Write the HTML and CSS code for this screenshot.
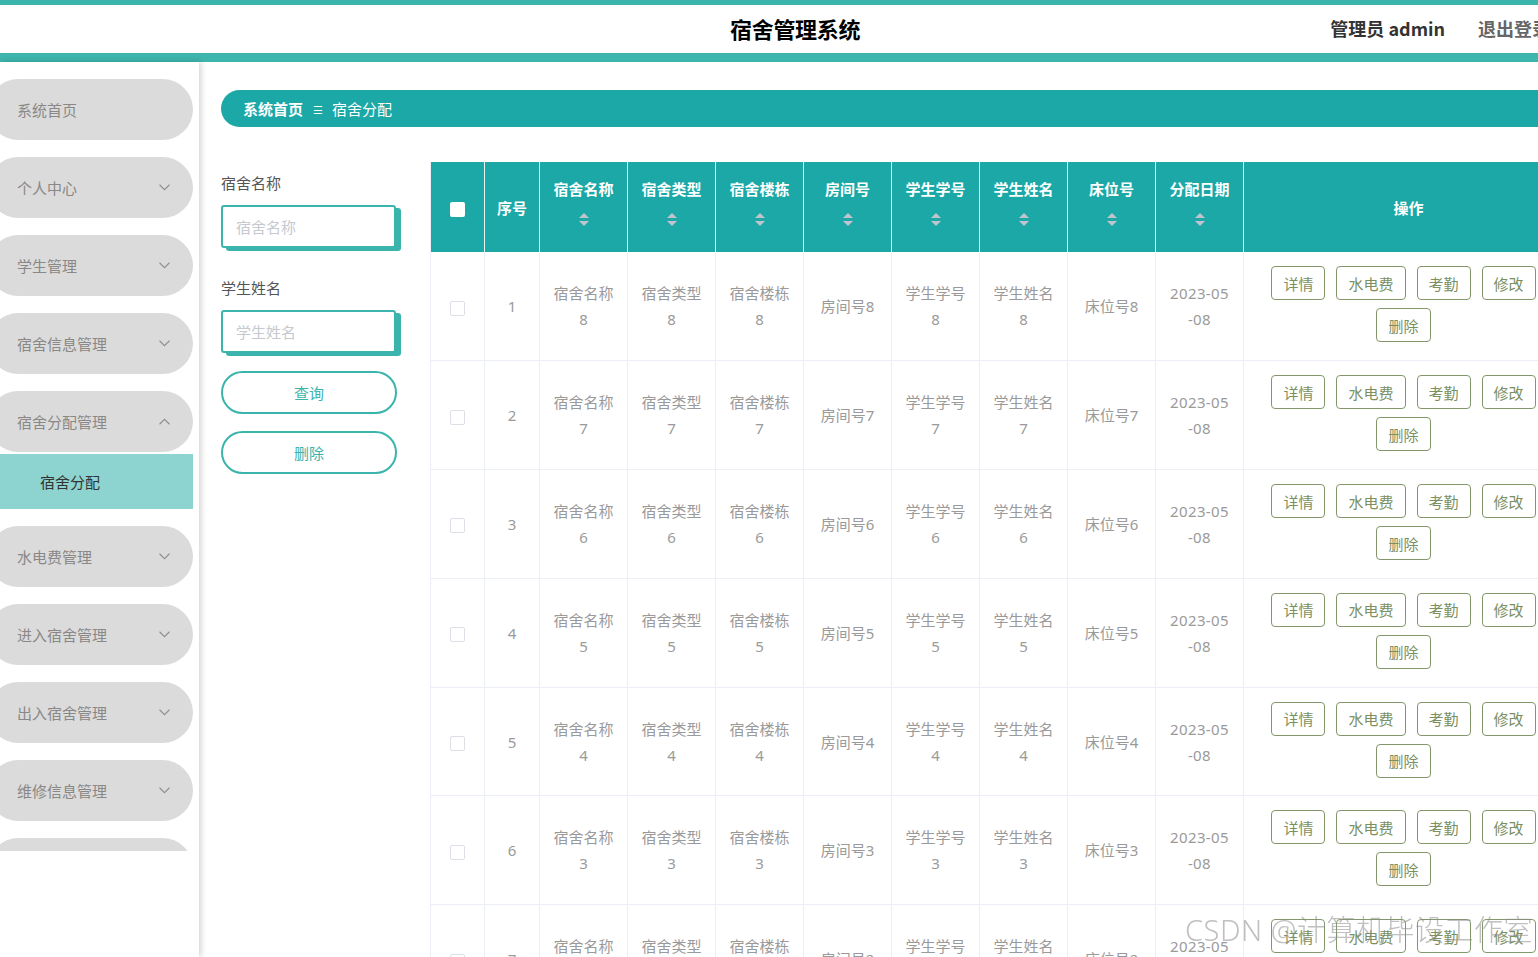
FILE: index.html
```html
<!DOCTYPE html>
<html lang="zh-CN">
<head>
<meta charset="utf-8">
<title>宿舍管理系统</title>
<link rel="stylesheet" href="styles.css">
</head>
<body>
<div class="topline"></div>
<header class="header">
  <div class="title">宿舍管理系统</div>
  <div class="user">
    <span class="admin">管理员 admin</span>
    <span class="logout">退出登录</span>
  </div>
</header>
<div class="band"></div>
<div class="layout">
  <aside class="sidebar">
    <nav class="menu">
      <div class="item">系统首页</div>
      <div class="item">个人中心<svg class="chev" viewBox="0 0 10 6"><polyline points="0.5,0.5 5,5 9.5,0.5"/></svg></div>
      <div class="item">学生管理<svg class="chev" viewBox="0 0 10 6"><polyline points="0.5,0.5 5,5 9.5,0.5"/></svg></div>
      <div class="item">宿舍信息管理<svg class="chev" viewBox="0 0 10 6"><polyline points="0.5,0.5 5,5 9.5,0.5"/></svg></div>
      <div class="item">宿舍分配管理<svg class="chev" viewBox="0 0 10 6"><polyline points="0.5,5.5 5,1 9.5,5.5"/></svg></div>
      <div class="sub">宿舍分配</div>
      <div class="item">水电费管理<svg class="chev" viewBox="0 0 10 6"><polyline points="0.5,0.5 5,5 9.5,0.5"/></svg></div>
      <div class="item">进入宿舍管理<svg class="chev" viewBox="0 0 10 6"><polyline points="0.5,0.5 5,5 9.5,0.5"/></svg></div>
      <div class="item">出入宿舍管理<svg class="chev" viewBox="0 0 10 6"><polyline points="0.5,0.5 5,5 9.5,0.5"/></svg></div>
      <div class="item">维修信息管理<svg class="chev" viewBox="0 0 10 6"><polyline points="0.5,0.5 5,5 9.5,0.5"/></svg></div>
      <div class="item">系统管理<svg class="chev" viewBox="0 0 10 6"><polyline points="0.5,0.5 5,5 9.5,0.5"/></svg></div>
    </nav>
  </aside>
  <main class="main">
    <div class="crumb"><b>系统首页</b><span class="sep">☰</span><span>宿舍分配</span></div>
    <div class="content">
      <form class="search">
        <label class="lbl">宿舍名称</label>
        <input class="inp" placeholder="宿舍名称">
        <label class="lbl lbl2">学生姓名</label>
        <input class="inp" placeholder="学生姓名">
        <button type="button" class="pill first">查询</button>
        <button type="button" class="pill">删除</button>
      </form>
      <table class="grid">
        <colgroup>
          <col class="c-chk"><col class="c-idx"><col class="c-n"><col class="c-n"><col class="c-n"><col class="c-n"><col class="c-n"><col class="c-n"><col class="c-n"><col class="c-n"><col class="c-op">
        </colgroup>
        <thead>
          <tr>
            <th><span class="hbox"></span></th>
            <th>序号</th>
            <th><div class="sortable">宿舍名称<span class="caret"><i class="up"></i><i class="dn"></i></span></div></th>
            <th><div class="sortable">宿舍类型<span class="caret"><i class="up"></i><i class="dn"></i></span></div></th>
            <th><div class="sortable">宿舍楼栋<span class="caret"><i class="up"></i><i class="dn"></i></span></div></th>
            <th><div class="sortable">房间号<span class="caret"><i class="up"></i><i class="dn"></i></span></div></th>
            <th><div class="sortable">学生学号<span class="caret"><i class="up"></i><i class="dn"></i></span></div></th>
            <th><div class="sortable">学生姓名<span class="caret"><i class="up"></i><i class="dn"></i></span></div></th>
            <th><div class="sortable">床位号<span class="caret"><i class="up"></i><i class="dn"></i></span></div></th>
            <th><div class="sortable">分配日期<span class="caret"><i class="up"></i><i class="dn"></i></span></div></th>
            <th class="opth">操作</th>
          </tr>
        </thead>
        <tbody id="rows"></tbody>
      </table>
    </div>
  </main>
</div>
<div class="watermark">CSDN @计算机毕设工作室</div>
<script>
(function(){
  var tb = document.getElementById('rows');
  var html = '';
  for (var i = 1; i <= 8; i++) {
    var n = 9 - i;
    html += '<tr>' +
      '<td><span class="box"></span></td>' +
      '<td><div class="cell">' + i + '</div></td>' +
      '<td><div class="cell">宿舍名称' + n + '</div></td>' +
      '<td><div class="cell">宿舍类型' + n + '</div></td>' +
      '<td><div class="cell">宿舍楼栋' + n + '</div></td>' +
      '<td><div class="cell">房间号' + n + '</div></td>' +
      '<td><div class="cell">学生学号' + n + '</div></td>' +
      '<td><div class="cell">学生姓名' + n + '</div></td>' +
      '<td><div class="cell">床位号' + n + '</div></td>' +
      '<td><div class="cell date">2023-05<br>-08</div></td>' +
      '<td class="op"><div class="ops"><span class="btn">详情</span><span class="btn">水电费</span><span class="btn">考勤</span><span class="btn">修改</span><span class="btn">删除</span></div></td>' +
      '</tr>';
  }
  tb.innerHTML = html;
})();
</script>
</body>
</html>
```
FILE: styles.css
```css
* { box-sizing: border-box; }
html, body {
  margin: 0;
  padding: 0;
  width: 1538px;
  height: 957px;
  overflow: hidden;
  background: #fff;
  font-family: "Noto Sans", "Noto Sans CJK SC", sans-serif;
  font-size: 15px;
}
.topline { height: 5px; background: #3bb4ad; }
.header {
  height: 48px;
  width: 1550px;
  display: flex;
  align-items: center;
  padding-left: 730px;
  padding-bottom: 3px;
  white-space: nowrap;
  font-family: "Noto Sans CJK SC", sans-serif;
}
.title { font-size: 22px; font-weight: 700; color: #000; letter-spacing: -0.3px; }
.user { margin-left: auto; display: flex; gap: 33px; font-size: 18px; font-weight: 700; padding-top: 1px; }
.admin { color: #333; }
.logout { color: #666; }
.band { height: 9px; background: #3eb5ad; }

.layout { display: flex; height: 895px; }
.sidebar {
  width: 199px;
  flex-shrink: 0;
  background: #fff;
  box-shadow: 2px 0 6px rgba(0,0,0,0.18);
  position: relative;
  z-index: 1;
}
.menu { height: 789px; overflow: hidden; padding-top: 17px; }
.item {
  margin-left: -12px;
  width: 205px;
  height: 61px;
  margin-bottom: 17px;
  border-radius: 31px;
  background: #dbdbdb;
  color: #8a8886;
  display: flex;
  align-items: center;
  padding-left: 29px;
  padding-right: 23px;
  font-family: "Noto Sans CJK SC", sans-serif;
  font-size: 15px;
}
.chev {
  margin-left: auto;
  width: 11px;
  height: 7px;
  fill: none;
  stroke: #8f8f8f;
  stroke-width: 1;
}
.item:nth-child(5) { margin-bottom: 2px; }
.sub {
  width: 193px;
  height: 55px;
  margin-bottom: 17px;
  background: #8dd3cf;
  color: #333;
  display: flex;
  align-items: center;
  padding-left: 40px;
  font-size: 15px;
  font-family: "Noto Sans CJK SC", sans-serif;
}

.main { flex: 1; min-width: 0; overflow: hidden; padding: 28px 0 0 22px; }
.crumb {
  width: 1360px;
  height: 37px;
  border-radius: 19px 0 0 19px;
  background: #1ba8a6;
  color: #fff;
  display: flex;
  align-items: center;
  padding-left: 22px;
  font-family: "Noto Sans CJK SC", sans-serif;
  font-size: 15px;
}
.crumb b { font-weight: 700; }
.sep { margin: 0 9px 0 10px; font-size: 11px; }

.content { display: flex; align-items: flex-start; margin-top: 35px; }
.search { width: 209px; flex-shrink: 0; display: flex; flex-direction: column; padding-top: 11px; }
.lbl { color: #555; font-size: 15px; line-height: 20px; font-family: "Noto Sans CJK SC", sans-serif; }
.lbl2 { margin-top: 30px; }
.inp {
  margin-top: 12px;
  width: 175px;
  height: 43px;
  border: 2px solid #3bb4ad;
  border-radius: 3px;
  box-shadow: 5px 3px 0 #3bb4ad;
  padding: 0 13px;
  font-size: 15px;
  font-family: "Noto Sans CJK SC", sans-serif;
  color: #333;
  outline: none;
}
.inp::placeholder { color: #c6c9cf; }
.pill {
  width: 176px;
  height: 43px;
  border: 2px solid #3bb4ad;
  border-radius: 22px;
  background: #fff;
  color: #3bb4ad;
  font-size: 15px;
  font-family: "Noto Sans CJK SC", sans-serif;
  margin-top: 17px;
  padding: 0;
}
.pill.first { margin-top: 18px; }

.grid {
  flex-shrink: 0;
  width: 1133px;
  table-layout: fixed;
  border-collapse: collapse;
  border-left: 1px solid #ebeef5;
  font-family: "Noto Sans", "Noto Sans CJK SC", sans-serif;
}
.c-chk { width: 54px; }
.c-idx { width: 55px; }
.c-n { width: 88px; }
.c-op { width: 330px; }
.grid th {
  height: 90px;
  background: #1ba8a6;
  color: #fff;
  font-weight: 700;
  font-size: 15px;
  text-align: center;
  border-right: 1px solid #e6f4f3;
  padding: 0;
  font-family: "Noto Sans CJK SC", sans-serif;
}
.grid th.opth { padding-right: 0; }
.sortable { line-height: 23px; padding-bottom: 12px; }
.caret { display: flex; flex-direction: column; align-items: center; gap: 3px; margin: 13px auto 0; width: 10px; }
.caret i { display: block; width: 0; height: 0; border-left: 5px solid transparent; border-right: 5px solid transparent; }
.caret .up { border-bottom: 5px solid #c0c4cc; }
.caret .dn { border-top: 5px solid #c0c4cc; }
.hbox { display: inline-block; width: 15px; height: 15px; background: #fff; border-radius: 2px; vertical-align: middle; }
.grid td {
  height: 108.8px;
  border-right: 1px solid #ebeef5;
  border-bottom: 1px solid #ebeef5;
  text-align: center;
  vertical-align: middle;
  color: #9a9a9a;
  font-size: 15px;
  padding: 0;
}
.cell { padding: 0 12px; line-height: 26px; word-break: break-all; font-family: "Noto Sans", "Noto Sans CJK SC", sans-serif; }
.date { letter-spacing: 0.4px; }
.box { display: inline-block; width: 15px; height: 15px; border: 1px solid #dcdfe6; border-radius: 2px; vertical-align: middle; background: #fff; }
.grid td.op { vertical-align: top; padding: 14px 20px 0 10px; }
.ops { display: flex; flex-wrap: wrap; justify-content: center; column-gap: 11px; row-gap: 8px; }
.btn {
  height: 34px;
  border: 1px solid #83976a;
  border-radius: 4px;
  color: #7b8f5f;
  padding: 0 11px;
  display: flex;
  align-items: center;
  font-size: 15px;
  font-family: "Noto Sans CJK SC", sans-serif;
  background: #fff;
}
.watermark {
  position: fixed;
  left: 1185px;
  top: 907px;
  font-size: 29px;
  color: rgba(140,140,140,0.55);
  white-space: nowrap;
  font-family: "Noto Sans", "Noto Sans CJK SC", sans-serif;
  font-weight: 300;
  letter-spacing: 0.5px;
}
```
